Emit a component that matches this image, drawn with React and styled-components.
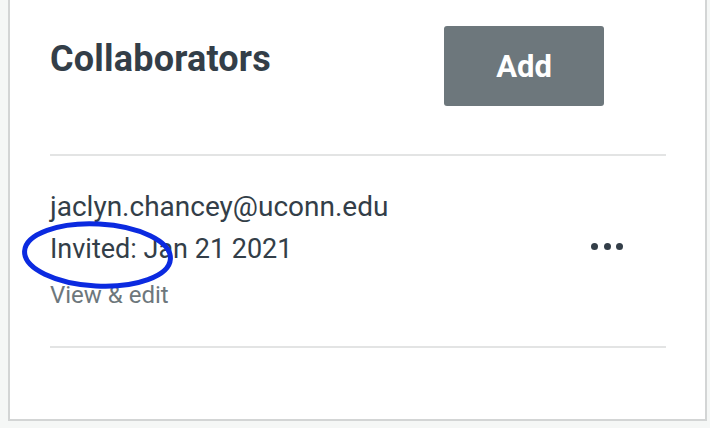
import React from 'react';
import styled, { createGlobalStyle } from 'styled-components';

const GlobalStyle = createGlobalStyle`
  html, body {
    margin: 0;
    padding: 0;
    background: #f5f7f6;
  }
  body {
    font-family: Roboto, "Liberation Sans", sans-serif;
    color: #333e48;
  }
`;

const Page = styled.div`
  width: 710px;
  height: 428px;
  overflow: hidden;
  padding-left: 8px;
  box-sizing: border-box;
`;

const Card = styled.section`
  position: relative;
  width: 699px;
  height: 421px;
  box-sizing: border-box;
  background: #ffffff;
  border: 2px solid #d3d5d5;
  border-top: none;
  padding: 0 39px 0 40px;
`;

const Header = styled.header`
  display: flex;
  align-items: flex-start;
  justify-content: space-between;
  padding: 26px 62px 48px 0;
  border-bottom: 2px solid #e3e4e4;
`;

const Title = styled.h2`
  margin: 12px 0 0 0;
  font-size: 36px;
  line-height: 42px;
  font-weight: 700;
  letter-spacing: 0.2px;
  color: #333e48;
`;

const AddButton = styled.button`
  width: 160px;
  height: 80px;
  border: none;
  border-radius: 3px;
  background: #6d777c;
  color: #ffffff;
  font-family: inherit;
  font-size: 31px;
  font-weight: 700;
  cursor: pointer;
`;

const Row = styled.div`
  display: flex;
  align-items: center;
  justify-content: space-between;
  padding: 30px 43px 33px 0;
  border-bottom: 2px solid #e3e4e4;
`;

const Info = styled.div`
  display: flex;
  flex-direction: column;
`;

const Line = styled.div`
  font-size: ${({ size }) => size || 28}px;
  line-height: 42px;
  color: #333e48;
`;

const SubLink = styled.a`
  font-size: 24px;
  line-height: 36px;
  margin-top: 7px;
  color: #6d777c;
  text-decoration: none;
`;

const Dots = styled.button`
  display: flex;
  gap: 5.5px;
  padding: 0;
  border: none;
  background: transparent;
  cursor: pointer;
  margin-top: -7px;
`;

const Dot = styled.span`
  width: 7px;
  height: 7px;
  border-radius: 50%;
  background: #333e48;
`;

const Marker = styled.svg`
  position: absolute;
  left: 10px;
  top: 213px;
  pointer-events: none;
`;

const App = () => {
  return (
    <Page>
      <GlobalStyle />
      <Card>
        <Header>
          <Title>Collaborators</Title>
          <AddButton type="button">Add</AddButton>
        </Header>

        {/* collaborator row */}
        <Row>
          <Info>
            <Line size={28}>jaclyn.chancey@uconn.edu</Line>
            <Line size={27}>Invited: Jan 21 2021</Line>
            <SubLink href="#">View &amp; edit</SubLink>
          </Info>
          <Dots type="button" aria-label="More">
            <Dot />
            <Dot />
            <Dot />
          </Dots>
        </Row>

        {/* hand-drawn highlight */}
        <Marker width="170" height="90" viewBox="0 0 170 90">
          <ellipse cx="77.5" cy="42" rx="73" ry="31" fill="none" stroke="#0b2ae0" strokeWidth="5" transform="rotate(3 77.5 42)" />
        </Marker>
      </Card>
    </Page>
  );
};

export default App;
